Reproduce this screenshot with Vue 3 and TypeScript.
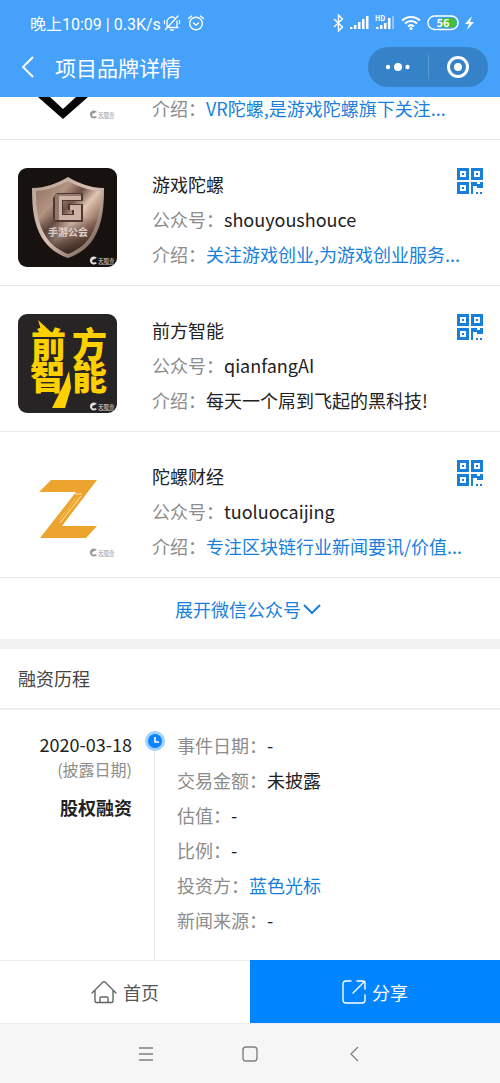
<script setup lang="ts">
interface Account {
  logo: 'dark' | 'guild' | 'ahead' | 'zed'
  name: string
  id: string
  intro: string
  link: boolean
}

interface Fact {
  label: string
  value: string
  link?: boolean
}

const accounts: Account[] = [
  { logo: 'dark', name: 'VR陀螺', id: 'vrtuoluo', intro: 'VR陀螺,是游戏陀螺旗下关注...', link: true },
  { logo: 'guild', name: '游戏陀螺', id: 'shouyoushouce', intro: '关注游戏创业,为游戏创业服务...', link: true },
  { logo: 'ahead', name: '前方智能', id: 'qianfangAI', intro: '每天一个屌到飞起的黑科技!', link: false },
  { logo: 'zed', name: '陀螺财经', id: 'tuoluocaijing', intro: '专注区块链行业新闻要讯/价值...', link: true },
]

const facts: Fact[] = [
  { label: '事件日期', value: '-' },
  { label: '交易金额', value: '未披露' },
  { label: '估值', value: '-' },
  { label: '比例', value: '-' },
  { label: '投资方', value: '蓝色光标', link: true },
  { label: '新闻来源', value: '-' },
]
</script>

<template>
  <div class="page">
    <header class="top">
      <div class="status">
        <span class="clock">晚上10:09 | 0.3K/s</span>
        <svg class="bell" width="18" height="18" viewBox="0 0 18 18" fill="none" stroke="#fff" stroke-width="1.3" stroke-linecap="round">
          <path d="M4 12.500V8a5 5 0 0 1 7.500-4.300M14 7v5.500M6 13.500h9M7.500 16h3M15 2L2.500 15.500M1.500 6.500v3M16.500 6.500v3" />
        </svg>
        <svg class="alarm" width="18" height="18" viewBox="0 0 18 18" fill="none" stroke="#fff" stroke-width="1.4" stroke-linecap="round">
          <circle cx="9" cy="9.500" r="6.300" />
          <path d="M6.500 9l2.500 2 2.500-2M1.500 4.500L4.500 2M16.500 4.500L13.500 2" />
        </svg>
        <span class="spring"></span>
        <svg width="11" height="18" viewBox="0 0 11 18" fill="none" stroke="#fff" stroke-width="1.400">
          <path d="M1 5l8.500 8L5.500 17V1l4 4L1 13" />
        </svg>
        <svg width="19" height="18" viewBox="0 0 19 18" fill="#fff">
          <path d="M0 13h2.500v2H0zM4 11h2.500v4H4zM8 8h2.500v7H8zM12 5h2.500v10H12zM16 2h2.500v13H16z" />
        </svg>
        <svg width="20" height="18" viewBox="0 0 20 18" fill="#fff">
          <text x="0" y="7" font-size="7" font-weight="700">HD</text>
          <path d="M1 13h2.500v2H1zM5 11h2.500v4H5zM9 9h2.500v6H9zM13 4h2.500v11H13z" />
          <path d="M17 2h2v13h-2z" opacity=".4" />
        </svg>
        <svg width="20" height="18" viewBox="0 0 20 18" fill="none" stroke="#fff" stroke-width="2">
          <path d="M1 6.500a13 13 0 0 1 18 0M4 9.500a8.500 8.500 0 0 1 12 0M7 12.500a4.500 4.500 0 0 1 6 0" />
          <circle cx="10" cy="14.500" r="1.500" fill="#fff" stroke="none" />
        </svg>
        <svg width="32" height="18" viewBox="0 0 32 18">
          <path d="M15 4h10a4.500 4.500 0 0 1 0 9.500H15z" fill="#43bf3c" />
          <rect x="1" y="2" width="30" height="13.500" rx="6.500" fill="none" stroke="#fff" stroke-width="1.400" />
          <text x="16" y="12.500" text-anchor="middle" font-size="11" font-weight="700" fill="#fff">56</text>
        </svg>
        <svg width="10" height="18" viewBox="0 0 10 18" fill="#fff"><path d="M7 2L0 10h4l-2 6 7-8H5z" /></svg>
      </div>
      <div class="bar">
        <button class="back" type="button" aria-label="返回">
          <svg width="14" height="22" viewBox="0 0 14 22" fill="none" stroke="#fff" stroke-width="2"><path d="M12 1L2 11l10 10" /></svg>
        </button>
        <h1>项目品牌详情</h1>
        <div class="capsule">
          <button type="button" aria-label="更多">
            <svg width="26" height="10" viewBox="0 0 26 10" fill="#fff"><circle cx="3" cy="5" r="2.200" /><circle cx="13" cy="5" r="4" /><circle cx="22.500" cy="5" r="2.200" /></svg>
          </button>
          <i></i>
          <button type="button" aria-label="关闭">
            <svg width="24" height="24" viewBox="0 0 24 24"><circle cx="12" cy="12" r="9.500" fill="none" stroke="#fff" stroke-width="3" /><circle cx="12" cy="12" r="4" fill="#fff" /></svg>
          </button>
        </div>
      </div>
    </header>

    <main>
      <ul class="accounts">
        <li v-for="(a, i) in accounts" :key="a.id" :class="{ clipped: i === 0 }">
          <div class="item">
            <svg class="logo" viewBox="0 0 99 99" aria-hidden="true">
              <defs v-if="a.logo === 'guild'">
                <linearGradient id="bronze" x1="0" y1="0" x2="1" y2="1">
                  <stop offset="0" stop-color="#8d6e60" />
                  <stop offset=".28" stop-color="#b39382" />
                  <stop offset=".42" stop-color="#6d5146" />
                  <stop offset=".56" stop-color="#e3c5b3" />
                  <stop offset=".75" stop-color="#8c6a5a" />
                  <stop offset="1" stop-color="#3b2a24" />
                </linearGradient>
                <linearGradient id="rim" x1="0" y1="0" x2="1" y2="1">
                  <stop offset="0" stop-color="#b79f93" />
                  <stop offset=".5" stop-color="#d7c0b4" />
                  <stop offset="1" stop-color="#5b473e" />
                </linearGradient>
                <linearGradient id="shade" x1="0" y1="0" x2="0" y2="1">
                  <stop offset=".5" stop-color="#2b1b15" stop-opacity="0" />
                  <stop offset="1" stop-color="#2b1b15" stop-opacity=".85" />
                </linearGradient>
              </defs>
              <template v-if="a.logo === 'dark'">
                <path d="M45 8L80 20v30c0 12-5 20-10 25L45 97 20 75C15 70 10 62 10 50V20z" fill="#050505" />
                <path d="M45 18L66 27v22c0 12-3 19-8 26L45 87 32 75c-5-7-8-14-8-26V27z" fill="#fff" />
              </template>
              <template v-else-if="a.logo === 'guild'">
                <rect width="99" height="99" fill="#17110f" />
                <path d="M50 9c10 6 22 11 36 11 0 22-2 36-10 50-6 10-15 16-26 20C38 86 30 79 24 70 16 56 14 42 14 20c14 0 26-5 36-11z" fill="url(#rim)" />
                <path d="M50 13c9 5 19 9 32 10 0 20-2 32-9 44-5 9-13 15-23 19-10-4-18-10-23-19-7-12-9-24-9-44 13-1 23-5 32-10z" fill="url(#bronze)" />
                <path d="M50 13c9 5 19 9 32 10 0 20-2 32-9 44-5 9-13 15-23 19-10-4-18-10-23-19-7-12-9-24-9-44 13-1 23-5 32-10z" fill="url(#shade)" />
                <path d="M39 25h26v8H45v13h9v-4h-4v-6h15v18H37l-2-4V30z" fill="#4c3830" />
                <path d="M39 26h24v6H44v15h12v-5h-4v-5h11v15H37V29z" fill="#ceb3a5" />
                <path d="M39 26h24v2H41v24h-4V29z" fill="#92776a" />
                <text x="50" y="68" text-anchor="middle" font-size="10" font-weight="700" fill="#dccfc8">手游公会</text>
              </template>
              <template v-else-if="a.logo === 'ahead'">
                <rect width="99" height="99" fill="#262425" />
                <g fill="#fdd000" font-weight="900" font-size="35">
                  <text x="13 54" y="44">前方</text>
                  <text x="12 54" y="76">智能</text>
                </g>
                <path d="M20 6l14 13H24zM51 57l-5 13-12 24h13l6-20z" fill="#fdd000" />
              </template>
              <template v-else>
                <path d="M33 20h46L44 66h35L68 78H22l36-46H21z" fill="#eda42f" />
                <path d="M64 34h-7M63 36L42 63" fill="none" stroke="#ffe7a8" stroke-width="1" />
                <path d="M59 37L41 60" fill="none" stroke="#f6c566" stroke-width="1" />
              </template>
              <g :fill="a.logo === 'guild' || a.logo === 'ahead' ? '#dedede' : '#9b9b9b'">
                <path d="M79 90a4 4 0 1 0 0 5l-2-1a2 2 0 0 1-3-1c1-2 3-2 5-3z" />
                <text x="80" y="95" font-size="5.500">天眼查</text>
                <path d="M81 96h15v1H81z" opacity=".5" />
              </g>
            </svg>
            <div class="info">
              <h2>{{ a.name }}</h2>
              <p><span>公众号：</span>{{ a.id }}</p>
              <p><span>介绍：</span><a v-if="a.link" href="#">{{ a.intro }}</a><template v-else>{{ a.intro }}</template></p>
            </div>
            <button class="qr" type="button" :aria-label="a.name + '二维码'">
              <svg width="26" height="26" viewBox="0 0 26 26" fill="#187fdc">
                <path fill-rule="evenodd" d="M0 0h12v12H0zM3 3v6h6V3zM5 5h2v2H5zM14 0h12v12H14zM17 3v6h6V3zM19 5h2v2h-2zM0 14h12v12H0zM3 17v6h6v-6zM5 19h2v2H5z" />
                <path d="M14 14h6v2h3v-2h3v6h-6v-2h-4v8h-2zM19 24h2v2h-2zM23 24h2v2h-2z" />
              </svg>
            </button>
          </div>
        </li>
      </ul>
      <button class="expand" type="button">
        展开微信公众号
        <svg width="18" height="12" viewBox="0 0 18 12" fill="none" stroke="#187fdc" stroke-width="2"><path d="M1 2l8 8 8-8" /></svg>
      </button>

      <section class="funding">
        <h2>融资历程</h2>
        <div class="event">
          <div class="when">
            <time datetime="2020-03-18">2020-03-18</time>
            <small>(披露日期)</small>
            <strong>股权融资</strong>
          </div>
          <div class="rail">
            <svg width="20" height="20" viewBox="0 0 20 20"><circle cx="10" cy="10" r="10" fill="#a1d0fc" /><circle cx="10" cy="10" r="7" fill="#0a84fb" /><path d="M10 6v5h4" fill="none" stroke="#fff" stroke-width="1.600" /></svg>
          </div>
          <dl>
            <div v-for="f in facts" :key="f.label">
              <dt>{{ f.label }}：</dt>
              <dd><a v-if="f.link" href="#">{{ f.value }}</a><template v-else>{{ f.value }}</template></dd>
            </div>
          </dl>
        </div>
      </section>
    </main>

    <footer>
      <div class="actions">
        <button type="button">
          <svg width="26" height="24" viewBox="0 0 26 24" fill="none" stroke="#666" stroke-width="1.400" stroke-linecap="round" stroke-linejoin="round">
            <path d="M1 13L11.500 2.500q1.500-1.500 3 0L25 13M4 11v10q0 1.500 1.500 1.500h15q1.500 0 1.500-1.500V11M9 22v-4q0-1 1-1h6q1 0 1 1v4" />
          </svg>
          首页
        </button>
        <button class="share" type="button">
          <svg width="24" height="24" viewBox="0 0 24 24" fill="none" stroke="#fff" stroke-width="1.400" stroke-linecap="round" stroke-linejoin="round">
            <path d="M9 1H4Q1 1 1 4v16q0 3 3 3h16q3 0 3-3v-5M15 1h6q2 0 2 2v6M22 2L11 13" />
          </svg>
          分享
        </button>
      </div>
      <nav>
        <button type="button" aria-label="菜单"><svg width="16" height="16" viewBox="0 0 16 16" stroke="#808080" stroke-width="1.300"><path d="M1 2h14M1 8h14M1 14h14" /></svg></button>
        <button type="button" aria-label="主屏幕"><svg width="16" height="16" viewBox="0 0 16 16" fill="none" stroke="#808080" stroke-width="1.400"><rect x="1" y="1" width="14" height="14" rx="3" /></svg></button>
        <button type="button" aria-label="后退"><svg width="16" height="16" viewBox="0 0 16 16" fill="none" stroke="#808080" stroke-width="1.300"><path d="M12 1L5 8l7 7" /></svg></button>
      </nav>
    </footer>
  </div>
</template>

<style>
body {
  margin: 0;
  background: #fff;
}
</style>

<style scoped>
.page {
  display: flex;
  flex-direction: column;
  min-height: 100vh;
  color: #222;
  font-family: "Noto Sans CJK SC", sans-serif;
  font-size: 18px;
}
button {
  display: flex;
  align-items: center;
  justify-content: center;
  margin: 0;
  padding: 0;
  border: 0;
  background: none;
  color: inherit;
  font: inherit;
  cursor: pointer;
}
svg {
  display: block;
  flex: none;
}
a {
  color: #187fdc;
  text-decoration: none;
}
h1,
h2,
p,
ul,
dl,
dd {
  margin: 0;
  padding: 0;
  font-size: inherit;
  font-weight: 400;
}
.top {
  padding-bottom: 8px;
  background: #45a1f9;
  color: #fff;
}
.status {
  display: flex;
  align-items: center;
  gap: 6px;
  height: 45px;
  padding: 0 25px 0 30px;
}
.clock {
  font-family: Roboto, "Noto Sans CJK SC", sans-serif;
  font-size: 16px;
  white-space: nowrap;
}
.bell {
  margin-left: -4px;
}
.spring {
  flex: 1;
}
.bar {
  display: flex;
  align-items: center;
  height: 44px;
  padding: 0 12px 0 20px;
}
.back {
  width: 15px;
  height: 40px;
}
h1 {
  flex: 1;
  margin-left: 20px;
  font-size: 21px;
  line-height: 40px;
}
.capsule {
  display: flex;
  align-items: center;
  width: 120px;
  height: 40px;
  border-radius: 20px;
  background: #3682c8;
}
.capsule button {
  flex: 1;
  height: 40px;
}
.capsule i {
  width: 1px;
  height: 24px;
  background: #5b9ad3;
}
main {
  display: flex;
  flex: 1;
  flex-direction: column;
}
.accounts {
  list-style: none;
}
.clipped {
  display: flex;
  align-items: flex-end;
  height: 43px;
  overflow: hidden;
}
.item {
  display: flex;
  flex: 1;
  align-items: flex-start;
  box-sizing: border-box;
  height: 146px;
  padding: 27px 16px 0 18px;
  border-bottom: 1px solid #e9e9e9;
}
.logo {
  width: 99px;
  height: 99px;
  margin-top: 1px;
  border-radius: 9px;
}
.info {
  flex: 1;
  min-width: 0;
  margin-left: 35px;
  line-height: 35px;
  white-space: nowrap;
}
.info span,
dt {
  color: #8c8c8c;
}
.qr {
  width: 28px;
  height: 28px;
}
.info + .qr {
  margin-left: -20px;
}
.expand {
  gap: 2px;
  box-sizing: border-box;
  width: 100%;
  height: 61px;
  padding-right: 4px;
  color: #187fdc;
}
.funding {
  display: flex;
  flex: 1;
  flex-direction: column;
  border-top: 10px solid #f2f2f2;
}
.funding h2 {
  padding: 0 18px;
  border-bottom: 2px solid #ededed;
  color: #444;
  line-height: 59px;
}
.event {
  display: flex;
  flex: 1;
}
.when {
  display: flex;
  flex-direction: column;
  width: 132px;
  padding-top: 22px;
  line-height: 25px;
  text-align: right;
}
.when small {
  color: #8c8c8c;
  font-size: 16px;
}
.when strong {
  margin-top: 13px;
  font-weight: 700;
}
.rail {
  display: flex;
  flex-direction: column;
  align-items: center;
  width: 45px;
  padding-top: 21px;
}
.rail::after {
  flex: 1;
  width: 1px;
  background: #e6e6e6;
  content: "";
}
dl {
  padding-top: 18px;
  line-height: 35px;
}
dl div {
  display: flex;
}
.actions {
  display: flex;
}
.actions button {
  flex: 1;
  gap: 6px;
  box-sizing: border-box;
  height: 63px;
  border-top: 1px solid #ececec;
  color: #555;
}
.actions .share {
  border-color: #0084ff;
  background: #0084ff;
  color: #fff;
}
nav {
  display: flex;
  justify-content: center;
  gap: 64px;
  box-sizing: border-box;
  height: 60px;
  border-top: 1px solid #ececec;
  background: #f6f6f6;
}
nav button {
  width: 40px;
}
</style>
